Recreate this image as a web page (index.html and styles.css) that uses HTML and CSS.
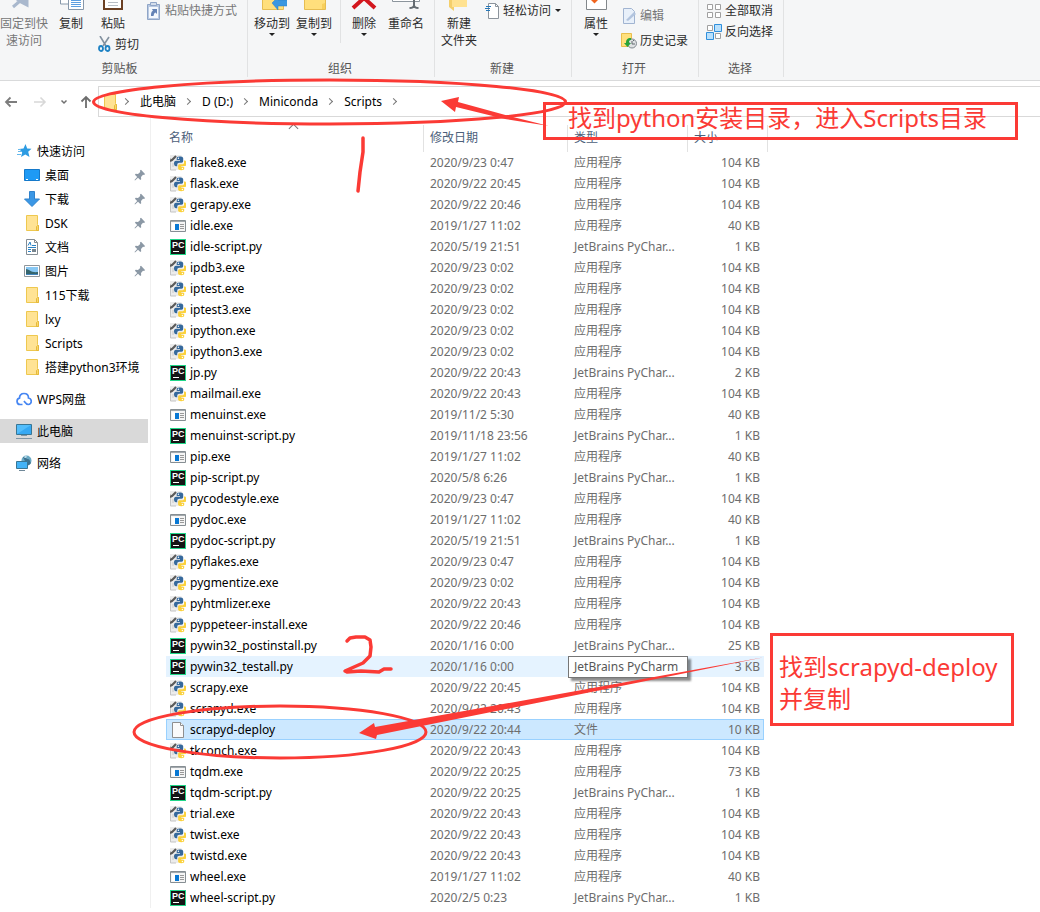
FILE: index.html
```
<!DOCTYPE html>
<html lang="zh-CN">
<head>
    <meta charset="UTF-8">
    <title>Scripts</title>
    <link rel="stylesheet" href="styles.css">
</head>
<body>
    <!-- shared icons -->
    <svg class="icon-defs" aria-hidden="true">
        <symbol id="i-py" viewBox="0 0 16 16">
            <path d="M0 0h11l2 2v11l-6 2H0z" fill="#ececec"/>
            <path d="M.5 3v12H6" stroke="#c4c4c4" fill="none"/>
            <path d="M0 6c3-1 4-3 6-5" stroke="#5a5a5a" stroke-width="2.200" fill="none"/>
            <path d="M2 9h2M2 11h2" stroke="#c9c9c9"/>
            <path d="M9.500 1.500c-2.300 0-2.800.8-2.800 1.800V5H10v.7H6C4.700 5.700 4 6.800 4 8.400s.8 2.800 2 2.800h1.200V9.700c0-1.200.9-2 2-2h2.300c1 0 1.700-.8 1.700-1.700V3.300c0-1.200-1.400-1.800-3.700-1.800z" fill="#36699c"/>
            <path d="M11.200 15.200c2.500 0 3-.8 3-1.700v-1.800h-3V11H15c.8 0 1.300-1.100 1.300-2.700S15.800 5.600 15 5.600h-1v1.800c0 1.100-.8 1.900-1.900 1.900H9.700c-1 0-1.600.7-1.600 1.600v2.600c0 1.100 1.200 1.700 3.100 1.700z" fill="#fbd13c"/>
            <circle cx="8.400" cy="3.300" r=".7" fill="#fff"/><circle cx="12.400" cy="13.500" r=".7" fill="#fff"/>
        </symbol>
        <symbol id="i-app" viewBox="0 0 16 16">
            <path d="M.5 2.500h15v11H.5z" fill="#f5f5f5" stroke="#868e93"/>
            <path d="M1 3h14v1H1z" fill="#a3a9ad"/>
            <path d="M2 5h3v7H2z" fill="#fff"/>
            <path d="M5 6h4v6H5z" fill="#0878d4"/>
            <path d="M10 6.500h4M10 8.500h4M10 10.500h4" stroke="#999"/>
        </symbol>
        <symbol id="i-pc" viewBox="0 0 16 16">
            <path d="M0 0h16v16H0z" fill="#21d789"/>
            <path d="M1 1h14v14H1z" fill="#151515"/>
            <text x="2" y="9" class="pc-text">PC</text>
            <path d="M3 12.500h6" stroke="#fff"/>
        </symbol>
        <symbol id="i-file" viewBox="0 0 16 16">
            <path d="M2.500.5h8l3 3v12h-11z" fill="#fafafa" stroke="#8f8f8f"/>
            <path d="M10.500.5v3h3" fill="#fff" stroke="#8f8f8f"/>
        </symbol>
        <symbol id="i-folder" viewBox="0 0 16 16">
            <path d="M2.500.5h11v9l1 1v5h-12z" fill="#ffe394" stroke="#eec84f"/>
            <path d="M12.500 15.500v-4l1-1h1v5z" fill="#fbd869" stroke="#e5b93c"/>
        </symbol>
        <symbol id="i-pin" viewBox="0 0 12 12">
            <path d="M6 1.500L7 .8 11 5l-.8 1-1.200-.2L7 8l.2 2.300-.9.8L4 8.800 1 11.500l-.5-.5L3.200 8 .9 5.700l.8-.9L4 5l2.200-2z" fill="#8b98a5"/>
        </symbol>
    </svg>

    <div class="ribbon">
        <section class="group group-clipboard">
            <div class="group-body">
                <button type="button" class="big-btn pin-btn muted">
                    <svg width="30" height="15"><path d="M4 7l7-6M8 0h10v5z" stroke="#a9b8cd" stroke-width="3" fill="#a9b8cd"/></svg>
                    固定到快<br>速访问
                </button>
                <button type="button" class="big-btn copy-btn">
                    <svg width="30" height="15"><path d="M4.500-1v5h8v-5z" fill="#fff" stroke="#8798aa"/><path d="M12.500-1v10.500h15V-1z" fill="#fff" stroke="#8798aa"/><path d="M15 .5h10M15 2.500h10M15 4.500h10M15 6.500h10" stroke="#5d9fe0"/></svg>
                    复制
                </button>
                <div class="paste-column">
                    <button type="button" class="big-btn paste-btn">
                        <svg width="30" height="15"><path d="M6-1v10h18V-1z" fill="#fff" stroke="#6b4023" stroke-width="2"/><path d="M10 2.500h10M10 5.500h10" stroke="#b8bec5"/></svg>
                        粘贴
                    </button>
                    <button type="button" class="small-btn cut-btn">
                        <svg width="13" height="16"><path d="M2 0l6 10M11 1L5 10" stroke="#8492a0" stroke-width="1.600"/><ellipse cx="3" cy="12.500" rx="2" ry="2.500" fill="none" stroke="#1e82c4" stroke-width="1.800"/><ellipse cx="9.500" cy="12.500" rx="2" ry="2.500" fill="none" stroke="#1e82c4" stroke-width="1.800"/></svg>
                        剪切
                    </button>
                </div>
                <div class="small-column">
                    <button type="button" class="small-btn shortcut-btn muted">
                        <svg width="13" height="18"><path d="M.5 2.500h12v15H.5z" fill="#b9c9e2" stroke="#8fa5c7"/><path d="M3.500.5h6v3h-6z" fill="#d3ddeb" stroke="#8fa5c7"/><path d="M2 5h9v11H2z" fill="#f4f8fd"/><path d="M4 14c0-4 1-5 2-5L5 7h5v5L8.500 10.500C7 11 7 12 6.500 14z" fill="#6382b5"/></svg>
                        粘贴快捷方式
                    </button>
                </div>
            </div>
            <div class="group-title">剪贴板</div>
        </section>
        <section class="group group-organize">
            <div class="group-body">
                <button type="button" class="big-btn">
                    <svg width="30" height="15"><path d="M5.500-1v10.500h21V-1z" fill="#ffdf7c" stroke="#e6bd52"/><path d="M15 3l6-6v3h10v6H21v4z" fill="#3b97e0" stroke="#2b7ec7" stroke-width=".5"/></svg>
                    移动到
                    <span class="caret"></span>
                </button>
                <button type="button" class="big-btn">
                    <svg width="30" height="15"><path d="M5.500-1v10.500h21V-1z" fill="#ffdf7c" stroke="#e6bd52"/><path d="M23 9V4l3-1v6z" fill="#f8cf5b"/></svg>
                    复制到
                    <span class="caret"></span>
                </button>
                <span class="divider"></span>
                <button type="button" class="big-btn">
                    <svg width="30" height="15"><path d="M4 8L15-2l11 10" stroke="#d3171e" stroke-width="4" fill="none"/></svg>
                    删除
                    <span class="caret"></span>
                </button>
                <button type="button" class="big-btn">
                    <svg width="30" height="15"><path d="M1.500-1v2.500h27V-1" stroke="#8c959d" fill="#fff"/><path d="M23-1v7M18.500 8c2.500 0 4.500-1 4.500-3 0 2 2 3 4.500 3" stroke="#646b71" stroke-width="2" fill="none"/></svg>
                    重命名
                </button>
            </div>
            <div class="group-title">组织</div>
        </section>
        <section class="group group-new">
            <div class="group-body">
                <button type="button" class="big-btn">
                    <svg width="30" height="15"><path d="M5-1v8l5 4V0h12v7h1V-1z" fill="#f4cf6b"/><path d="M8-1v8h15V-1z" fill="#ffe291"/></svg>
                    新建<br>文件夹
                </button>
                <button type="button" class="small-btn access-btn">
                    <svg width="14" height="16"><path d="M3.500.5h7l3 3v12h-10z" fill="#fff" stroke="#8c949c"/><path d="M10.500.5v3h3" fill="none" stroke="#8c949c"/><path d="M1 3.500h5M0 5.500h5M1 7.500h4" stroke="#2878b8"/></svg>
                    轻松访问
                    <span class="caret"></span>
                </button>
            </div>
            <div class="group-title">新建</div>
        </section>
        <section class="group group-open">
            <div class="group-body">
                <button type="button" class="big-btn">
                    <svg width="30" height="15"><path d="M5.500-1v10.500h20V-1z" fill="#fff" stroke="#82878b"/><path d="M9-1l4.500 4.500L18-1z" fill="#f0641e"/></svg>
                    属性
                    <span class="caret"></span>
                </button>
                <div class="small-column">
                    <button type="button" class="small-btn muted">
                        <svg width="16" height="16"><path d="M2.500.5h8l3 3v12h-11z" fill="#e8f0fa" stroke="#a1b4d1"/><path d="M5 12l8-8 2 2-8 7z" fill="#b2c4de"/></svg>
                        编辑
                    </button>
                    <button type="button" class="small-btn">
                        <svg width="16" height="16"><path d="M.5.500h10v13H.5z" fill="#ffe07d" stroke="#e8be4d"/><circle cx="11" cy="10.500" r="4.500" fill="#dfe2e4" stroke="#818990"/><path d="M11 8v3h3M8 10h1M13 7l-1 1" stroke="#626a70" fill="none"/><path d="M10 5C6 5 5 7 5 10H3l3.500 4L10 10H8c0-2 0-3 2-3z" fill="#28a33a"/></svg>
                        历史记录
                    </button>
                </div>
            </div>
            <div class="group-title">打开</div>
        </section>
        <section class="group group-select">
            <div class="group-body">
                <div class="small-column">
                    <button type="button" class="small-btn">
                        <svg width="16" height="16" fill="#fff" stroke="#a0a0a0"><path d="M1.500 1.500h5v5h-5zM9.500 1.500h5v5h-5zM1.500 9.500h5v5h-5zM9.500 9.500h5v5h-5z"/></svg>
                        全部取消
                    </button>
                    <button type="button" class="small-btn">
                        <svg width="16" height="16"><path d="M1.500 1.500h5v5h-5zM9.500 9.500h5v5h-5z" fill="#fff" stroke="#a0a0a0"/><path d="M8.500.5h7v7h-7zM.5 8.500h7v7h-7z" fill="#b9e0fc" stroke="#2f8fdc"/></svg>
                        反向选择
                    </button>
                </div>
            </div>
            <div class="group-title">选择</div>
        </section>
    </div>

    <div class="address-row">
        <div class="history-buttons">
            <button type="button" aria-label="后退"><svg width="14" height="12"><path d="M13 6H2M6.500 1.500L2 6l4.500 4.500" fill="none" stroke="#7d7d7d" stroke-width="1.800"/></svg></button>
            <button type="button" aria-label="前进"><svg width="14" height="12"><path d="M1 6h11M7.500 1.500L12 6l-4.500 4.500" fill="none" stroke="#d8d8d8" stroke-width="1.600"/></svg></button>
            <button type="button" aria-label="最近浏览的位置" class="recent"><svg width="8" height="6"><path d="M1.500 1.500L4 4l2.500-2.500" fill="none" stroke="#707070" stroke-width="1.500"/></svg></button>
            <button type="button" aria-label="上移"><svg width="12" height="14"><path d="M6 13V2M1.500 6.500L6 2l4.500 4.500" fill="none" stroke="#6d6d6d" stroke-width="1.800"/></svg></button>
        </div>
        <nav class="address-bar">
            <svg class="icon"><use href="#i-folder"/></svg>
            <span class="chevron"></span>
            <a href="#">此电脑</a>
            <span class="chevron"></span>
            <a href="#">D (D:)</a>
            <span class="chevron"></span>
            <a href="#">Miniconda</a>
            <span class="chevron"></span>
            <a href="#">Scripts</a>
            <span class="chevron"></span>
        </nav>
    </div>

    <div class="content">
        <nav class="sidebar">
            <a href="#" class="root"><svg class="icon" viewBox="0 0 16 16"><path d="M9.500 1l1.700 4.500 4.300.3-3.300 3L13.500 14l-4.200-2.500L5 14l1.200-4.800L3 6l4.500-.5z" fill="#2c9be2"/><path d="M2 6.500h3M2 8.500h4M1 11.500h4" stroke="#65b8ec"/></svg>快速访问</a>
            <a href="#"><svg class="icon" viewBox="0 0 16 16"><path d="M.5 2.500h15v11H.5z" fill="#1e9af5" stroke="#1579ca"/><path d="M2 12.500h2M12 12.500h2" stroke="#fff"/></svg>桌面<svg class="pin"><use href="#i-pin"/></svg></a>
            <a href="#"><svg class="icon" viewBox="0 0 16 16"><path d="M5.500.5h5V8h5L8 15.500.5 8h5z" fill="#3b97e5" stroke="#2f82cc"/></svg>下载<svg class="pin"><use href="#i-pin"/></svg></a>
            <a href="#"><svg class="icon"><use href="#i-folder"/></svg>DSK<svg class="pin"><use href="#i-pin"/></svg></a>
            <a href="#"><svg class="icon" viewBox="0 0 16 16"><path d="M2.500.5h8l3 3v12h-11z" fill="#fff" stroke="#858d94"/><path d="M10.500.5v3h3" fill="none" stroke="#858d94"/><path d="M4 6.500L6 3l1 3.500M8 6.500h4M4 8.500h8M4 10.500h3M4 12.500h3" stroke="#2a82c5" fill="none"/><path d="M8 10h4v3H8z" fill="#77848e"/></svg>文档<svg class="pin"><use href="#i-pin"/></svg></a>
            <a href="#"><svg class="icon" viewBox="0 0 16 16"><path d="M.5 2.500h15v11H.5z" fill="#fff" stroke="#8f969c"/><path d="M2 4h12v8H2z" fill="#88c8f4"/><path d="M2 6c3 0 5 4 12 3v3H2z" fill="#35666f"/><path d="M2 11h12v1H2z" fill="#4285bd"/></svg>图片<svg class="pin"><use href="#i-pin"/></svg></a>
            <a href="#"><svg class="icon"><use href="#i-folder"/></svg>115下载</a>
            <a href="#"><svg class="icon"><use href="#i-folder"/></svg>lxy</a>
            <a href="#"><svg class="icon"><use href="#i-folder"/></svg>Scripts</a>
            <a href="#"><svg class="icon"><use href="#i-folder"/></svg>搭建python3环境</a>
            <a href="#" class="root"><svg class="icon" viewBox="0 0 16 16"><path d="M6.500 13.500H4A3.200 3.200 0 0 1 3.500 7.200C3.500 4 5.500 2.500 8 2.500s4.500 1.700 4.500 4.500c1.800.3 2.800 1.500 2.800 3.200s-1.300 3.300-3 3.300c-2.300 0-2.800-1.500-4.300-3.500" fill="none" stroke="#4686f2" stroke-width="1.700"/></svg>WPS网盘</a>
            <a href="#" class="root current"><svg class="icon" viewBox="0 0 16 16"><path d="M.5 1.500h15v10H.5z" fill="#52bdfb" stroke="#397694"/><path d="M1 11L15 2v9z" fill="#35a8f3"/><path d="M5 12.500h6M0 15.500h16" stroke="#8096a5"/></svg>此电脑</a>
            <a href="#" class="root"><svg class="icon" viewBox="0 0 16 16"><circle cx="10.500" cy="5.500" r="5" fill="#6aa9c4"/><path d="M7 2c3 0 3 2 5 2s2 3 3 4c-1 2-3 2.500-4 2.500z" fill="#3c7290"/><path d="M8 2l2-1 1 1-2 1z" fill="#d5edf6"/><path d="M.5 6.500h11v7H.5z" fill="#43b3f7" stroke="#397694"/><path d="M3 15.500h6" stroke="#708898"/></svg>网络</a>
        </nav>

        <main class="files">
            <table>
                <thead>
                    <tr>
                        <th class="col-name">名称</th>
                        <th class="col-date">修改日期</th>
                        <th class="col-type">类型</th>
                        <th class="col-size">大小</th>
                    </tr>
                </thead>
                <tbody id="fileList"></tbody>
            </table>
        </main>
    </div>

    <!-- red pen marks over the window -->
    <svg class="marks" width="1040" height="912" viewBox="0 0 1040 912" aria-hidden="true">
        <g fill="none" stroke="#fb3a35" stroke-width="3" stroke-linecap="round" stroke-linejoin="round">
            <ellipse cx="329.500" cy="102" rx="236" ry="22"/>
            <ellipse cx="280" cy="732" rx="146" ry="26"/>
            <path d="M363 138v14l-3 20-2 19" stroke-width="3.500"/>
            <path d="M347 641l3-3 6-1h9l5 3 1 7-1 9-7 7-18 8 2 1 14-1 18 1 5-3h7" stroke-width="3.500"/>
        </g>
        <g fill="#fb3a35">
            <path d="M441 101l18-4-1 5 51 14 40 10-44-7-49-12-1 5z"/>
            <path d="M359 733l15-10 1 4 390-70-388 78-1 4z"/>
        </g>
    </svg>
    <div class="note note-dir">找到python安装目录，进入Scripts目录</div>
    <div class="note note-copy">找到scrapyd-deploy<br>并复制</div>

    <script src="script.js"></script>
</body>
</html>
```

FILE: styles.css
```
* {
    box-sizing: border-box;
}
body {
    position: relative;
    margin: 0;
    min-height: 912px;
    background: #fff;
    color: #000;
    font-family: "Noto Sans", "Noto Sans CJK SC", sans-serif;
    font-size: 12px;
    line-height: 17px;
    overflow-x: hidden;
}
a {
    color: inherit;
    text-decoration: none;
}
button {
    padding: 0;
    border: none;
    background: none;
    color: inherit;
    font: inherit;
    white-space: nowrap;
}
.icon-defs {
    display: none;
}
.icon {
    flex: none;
    width: 16px;
    height: 16px;
}
.pc-text {
    fill: #fff;
    font: bold 9px "Liberation Sans", sans-serif;
}

/* ribbon */
.ribbon {
    display: flex;
    height: 81px;
    background: #f5f6f7;
    border-bottom: 1px solid #d9dadb;
    color: #2b2b2b;
}
.group {
    display: flex;
    flex-direction: column;
    height: 77px;
    border-right: 1px solid #e1e2e3;
}
.group-body {
    display: flex;
    align-items: flex-start;
    height: 60px;
}
.group-title {
    padding-right: 2px;
    text-align: center;
    color: #555;
}
.group-clipboard {
    width: 248px;
}
.group-clipboard .group-title {
    padding-right: 8px;
}
.group-organize {
    width: 187px;
}
.group-new {
    width: 137px;
}
.group-open {
    width: 127px;
}
.group-select {
    width: 85px;
}
.group-organize .group-body,
.group-new .group-body,
.group-open .group-body {
    padding-left: 3px;
}
.group-select .group-body {
    padding-left: 7px;
}
.big-btn {
    width: 42px;
    text-align: center;
}
.big-btn svg {
    display: block;
    margin: 0 auto;
}
.pin-btn {
    width: 48px;
}
.copy-btn {
    width: 46px;
}
.paste-btn {
    width: 38px;
}
.muted {
    color: #777;
}
.caret {
    display: block;
    width: 0;
    margin: 1px auto 0;
    border: 3px solid transparent;
    border-top-color: #222;
    border-bottom: none;
}
.divider {
    width: 1px;
    height: 43px;
    margin: 0 2px 0 5px;
    background: #e1e2e3;
}
.paste-column {
    width: 49px;
}
.small-btn {
    display: flex;
    align-items: center;
    gap: 3px;
    height: 21px;
}
.small-column {
    padding-left: 4px;
}
.cut-btn {
    gap: 4px;
    height: 24px;
    padding-left: 4px;
}
.shortcut-btn {
    gap: 5px;
}
.access-btn {
    gap: 4px;
    padding-left: 5px;
}
.access-btn .caret {
    margin: 0;
}
.group-open .small-column {
    padding-top: 3px;
}
.group-open .small-btn {
    height: 25px;
}
.group-select .small-column {
    padding-left: 0;
}

/* address bar */
.address-row {
    display: flex;
    padding-top: 5px;
}
.history-buttons {
    display: flex;
    align-items: center;
    gap: 15px;
    width: 98px;
    padding-left: 4px;
}
.history-buttons button {
    display: flex;
}
.history-buttons .recent {
    margin-right: -3px;
    margin-left: -2px;
}
.address-bar {
    flex: 1;
    display: flex;
    align-items: center;
    height: 31px;
    padding-left: 3px;
    border: 1px solid #d9d9d9;
    border-right: none;
}
.chevron {
    width: 5px;
    height: 5px;
    margin: 0 12px 0 5px;
    border: solid #777;
    border-width: 1px 1px 0 0;
    transform: rotate(45deg);
}
.address-bar a + .chevron {
    margin-left: 9px;
}

/* content */
.content {
    display: flex;
}
.sidebar {
    width: 151px;
    padding: 22px 2px 0 0;
    border-right: 1px solid #f0f0f0;
}
.sidebar a {
    display: flex;
    align-items: center;
    gap: 5px;
    height: 24px;
    padding-left: 24px;
    white-space: nowrap;
}
.sidebar .root {
    padding-left: 16px;
    margin-top: 8px;
}
.sidebar .root:first-child {
    margin-top: 0;
}
.sidebar .current {
    background: #d9d9d9;
}
.pin {
    width: 12px;
    height: 12px;
    margin-left: auto;
    margin-right: 2px;
}
.files {
    flex: 1;
    padding: 8px 0 0 15px;
}
table {
    width: 598px;
    table-layout: fixed;
    border-collapse: separate;
    border-spacing: 0;
}
th {
    position: relative;
    height: 27px;
    padding: 0 6px 2px;
    border-right: 1px solid #e2e2e2;
    color: #4c607a;
    font-weight: normal;
    text-align: left;
}
.col-name {
    width: 258px;
    padding-left: 3px;
}
.col-name::before {
    content: "";
    position: absolute;
    top: 0;
    left: 124px;
    width: 6px;
    height: 6px;
    border: solid #777;
    border-width: 1px 0 0 1px;
    transform: rotate(45deg);
}
.col-date {
    width: 144px;
}
.col-type {
    width: 120px;
}
.col-size {
    border-right: none;
}
.col-size::after {
    content: "";
    position: absolute;
    top: 0;
    right: -4px;
    height: 27px;
    border-right: 1px solid #e2e2e2;
}
td {
    position: relative;
    height: 21px;
    padding: 0 6px;
    color: #6d6d6d;
    white-space: nowrap;
}
td:first-child {
    padding-left: 4px;
    color: #000;
}
td:last-child {
    padding-right: 4px;
    text-align: right;
}
.file-name {
    display: flex;
    align-items: center;
    gap: 4px;
}
.hovered td {
    background: #e5f3ff;
}
.selected td {
    background: #cce8ff;
    box-shadow: inset 0 1px #99d1ff, inset 0 -1px #99d1ff;
}
.selected td:first-child {
    box-shadow: inset 0 1px #99d1ff, inset 0 -1px #99d1ff, inset 1px 0 #99d1ff;
}
.selected td:last-child {
    box-shadow: inset 0 1px #99d1ff, inset 0 -1px #99d1ff, inset -1px 0 #99d1ff;
}
.tooltip {
    position: absolute;
    top: 0;
    left: 0;
    z-index: 1;
    width: 120px;
    height: 22px;
    padding: 1px 5px;
    border: 1px solid #767676;
    background: #fff;
    color: #575757;
    box-shadow: 3px 3px 2px rgba(0, 0, 0, 0.45);
}

/* pen marks and notes */
.marks {
    position: absolute;
    top: 0;
    left: 0;
    z-index: 2;
    pointer-events: none;
}
.note {
    position: absolute;
    z-index: 3;
    border: 3px solid #fb3a35;
    color: #fb3a35;
    font-size: 24px;
    line-height: 32px;
    white-space: nowrap;
}
.note-dir {
    top: 102px;
    left: 543px;
    width: 475px;
    height: 38px;
    padding-left: 22px;
    line-height: 26px;
}
.note-copy {
    top: 633px;
    left: 770px;
    width: 244px;
    padding: 15px 6px 8px;
}
```

FILE: script.js
```
// name, modified, icon, size in KB
const files = [
    ['flake8.exe', '2020/9/23 0:47', 'py', 104],
    ['flask.exe', '2020/9/22 20:45', 'py', 104],
    ['gerapy.exe', '2020/9/22 20:46', 'py', 104],
    ['idle.exe', '2019/1/27 11:02', 'app', 40],
    ['idle-script.py', '2020/5/19 21:51', 'pc', 1],
    ['ipdb3.exe', '2020/9/23 0:02', 'py', 104],
    ['iptest.exe', '2020/9/23 0:02', 'py', 104],
    ['iptest3.exe', '2020/9/23 0:02', 'py', 104],
    ['ipython.exe', '2020/9/23 0:02', 'py', 104],
    ['ipython3.exe', '2020/9/23 0:02', 'py', 104],
    ['jp.py', '2020/9/22 20:43', 'pc', 2],
    ['mailmail.exe', '2020/9/22 20:43', 'py', 104],
    ['menuinst.exe', '2019/11/2 5:30', 'app', 40],
    ['menuinst-script.py', '2019/11/18 23:56', 'pc', 1],
    ['pip.exe', '2019/1/27 11:02', 'app', 40],
    ['pip-script.py', '2020/5/8 6:26', 'pc', 1],
    ['pycodestyle.exe', '2020/9/23 0:47', 'py', 104],
    ['pydoc.exe', '2019/1/27 11:02', 'app', 40],
    ['pydoc-script.py', '2020/5/19 21:51', 'pc', 1],
    ['pyflakes.exe', '2020/9/23 0:47', 'py', 104],
    ['pygmentize.exe', '2020/9/23 0:02', 'py', 104],
    ['pyhtmlizer.exe', '2020/9/22 20:43', 'py', 104],
    ['pyppeteer-install.exe', '2020/9/22 20:46', 'py', 104],
    ['pywin32_postinstall.py', '2020/1/16 0:00', 'pc', 25],
    ['pywin32_testall.py', '2020/1/16 0:00', 'pc', 3, 'hovered'],
    ['scrapy.exe', '2020/9/22 20:45', 'py', 104],
    ['scrapyd.exe', '2020/9/22 20:43', 'py', 104],
    ['scrapyd-deploy', '2020/9/22 20:44', 'file', 10, 'selected'],
    ['tkconch.exe', '2020/9/22 20:43', 'py', 104],
    ['tqdm.exe', '2020/9/22 20:25', 'app', 73],
    ['tqdm-script.py', '2020/9/22 20:25', 'pc', 1],
    ['trial.exe', '2020/9/22 20:43', 'py', 104],
    ['twist.exe', '2020/9/22 20:43', 'py', 104],
    ['twistd.exe', '2020/9/22 20:43', 'py', 104],
    ['wheel.exe', '2019/1/27 11:02', 'app', 40],
    ['wheel-script.py', '2020/2/5 0:23', 'pc', 1]
];

const types = { py: '应用程序', app: '应用程序', pc: 'JetBrains PyChar...', file: '文件' };

document.getElementById('fileList').innerHTML = files.map(([name, date, icon, size, state]) => {
    const type = state === 'hovered' ? '<span class="tooltip">JetBrains PyCharm</span>' : types[icon];
    return `<tr class="${state || ''}">
        <td><div class="file-name"><svg class="icon"><use href="#i-${icon}"/></svg>${name}</div></td>
        <td>${date}</td>
        <td>${type}</td>
        <td>${size} KB</td>
    </tr>`;
}).join('');
```
